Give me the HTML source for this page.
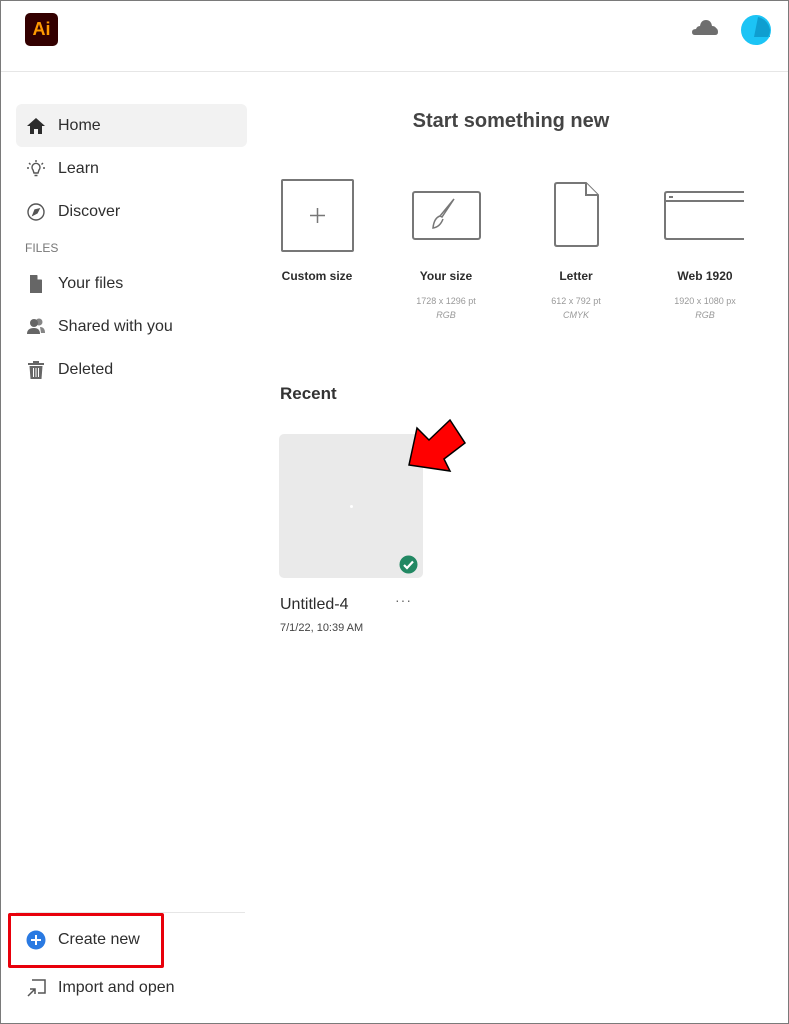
<!DOCTYPE html>
<html><head><meta charset="utf-8"><style>
*{margin:0;padding:0;box-sizing:border-box}
body{width:789px;height:1024px;background:#fff;font-family:"Liberation Sans",sans-serif;color:#2c2c2c;position:relative;overflow:hidden}
.frame{position:absolute;inset:0;border:1px solid #7a7a7a;pointer-events:none;z-index:9}
.a{position:absolute}
.nav{position:absolute;left:26px;font-size:16px;color:#2e2e2e;display:flex;align-items:center}
.nav svg{width:20px;height:20px;margin-right:12px}
.t{font-size:12px;font-weight:bold;color:#2c2c2c;text-align:center;width:120px}
.s{font-size:9px;color:#999;text-align:center;width:120px;line-height:14px}
</style></head><body>
<div class="frame"></div>
<div class="a" style="left:25px;top:13px;width:33px;height:33px;background:#330000;border-radius:5px;color:#ff9a00;font-weight:bold;font-size:18px;text-align:center;line-height:33px">Ai</div>
<svg class="a" style="left:691px;top:17px" width="28" height="20" viewBox="0 0 28 20"><path d="M4 18 Q1 18 1 15 Q1 12 5 12 Q6 9 9 9 Q10 3 15 3 Q20 3 21 9 Q24 9 25 11 Q27 12 27 15 Q27 18 24 18Z" fill="#6e6e6e"/></svg>
<svg class="a" style="left:741px;top:15px" width="30" height="30" viewBox="0 0 30 30"><circle cx="15" cy="15" r="14.5" fill="#1cc4f5"/><path d="M13 22 L17 2 Q26 4 29 14 L29 22Z" fill="#0f9ed0"/><circle cx="15" cy="15" r="14.5" fill="none" stroke="#1cc4f5" stroke-width="1"/></svg>
<div class="a" style="left:0;top:71px;width:789px;height:1px;background:#e6e6e6"></div>

<div class="a" style="left:16px;top:104px;width:231px;height:43px;background:#f2f2f2;border-radius:6px"></div>
<div class="nav" style="top:116px"><svg viewBox="0 0 20 20"><path d="M10 2 L19 10 H16 V18 H12 V13 H8 V18 H4 V10 H1Z" fill="#2c2c2c"/></svg>Home</div>
<div class="nav" style="top:159px"><svg viewBox="0 0 20 20" fill="none" stroke="#555" stroke-width="1.4"><path d="M7 11 a4 4 0 1 1 6 0 L12 14 H8Z"/><path d="M8.5 16.5 h3M10 1v2M3 4l1.5 1.5M17 4l-1.5 1.5M1 9h2M17 9h2"/></svg>Learn</div>
<div class="nav" style="top:202px"><svg viewBox="0 0 20 20" fill="none" stroke="#555" stroke-width="1.4"><circle cx="10" cy="10" r="8"/><path d="M7 13 L9 8 L13 7 L11 11Z" fill="#555"/></svg>Discover</div>
<div class="a" style="left:25px;top:241px;font-size:12px;color:#777">FILES</div>
<div class="nav" style="top:274px"><svg viewBox="0 0 20 20"><path d="M4 1 H11 L16 6 V19 H4Z" fill="#666"/><path d="M11.5 1 V5.5 H16" fill="#fff"/></svg>Your files</div>
<div class="nav" style="top:317px"><svg viewBox="0 0 20 20" fill="#666"><circle cx="8" cy="6" r="4"/><path d="M1 17 Q1 11 8 11 Q14 11 14 17Z"/><circle cx="13" cy="5" r="3.5" opacity=".8"/><path d="M14 10 Q19 10 19 16 H15Z" opacity=".8"/></svg>Shared with you</div>
<div class="nav" style="top:360px"><svg viewBox="0 0 20 20" fill="#666"><rect x="2" y="3" width="16" height="2"/><rect x="7" y="1" width="6" height="2"/><path d="M3.5 6 H16.5 L15.5 19 H4.5Z"/><path d="M7.5 8v9M10 8v9M12.5 8v9" stroke="#fff" stroke-width="1"/></svg>Deleted</div>

<div class="a" style="left:16px;top:912px;width:229px;height:1px;background:#e6e6e6"></div>
<div class="a" style="left:8px;top:913px;width:156px;height:55px;border:3px solid #e8000b;border-radius:2px"></div>
<div class="nav" style="top:930px"><svg viewBox="0 0 20 20"><circle cx="10" cy="10" r="9.5" fill="#2a7ae2"/><path d="M10 5v10M5 10h10" stroke="#fff" stroke-width="2"/></svg>Create new</div>
<div class="nav" style="top:978px"><svg viewBox="0 0 20 20" fill="none" stroke="#555" stroke-width="1.5"><path d="M6 2 H19 V15 H12"/><path d="M2 18 L9 11 M4 11 H9 V16"/></svg>Import and open</div>

<div class="a" style="left:280px;top:110px;width:462px;text-align:center;font-size:20px;font-weight:bold;color:#444">Start something new</div>
<svg class="a" style="left:281px;top:179px" width="73" height="73"><rect x="1" y="1" width="71" height="71" fill="none" stroke="#777" stroke-width="2" rx="1"/><path d="M36.5 29v15M29 36.5h15" stroke="#777" stroke-width="1.5"/></svg>
<svg class="a" style="left:412px;top:191px" width="69" height="50"><rect x="1" y="1" width="67" height="47" fill="none" stroke="#777" stroke-width="2" rx="2"/><path d="M42 8 L30 26 L28 25Z" fill="none" stroke="#777" stroke-width="1.5"/><path d="M28 25 Q22 27 21 37 Q28 36 31 28" fill="none" stroke="#777" stroke-width="1.5"/></svg>
<svg class="a" style="left:553px;top:182px" width="47" height="66"><path d="M4 1 H33 L45 13 V62 Q45 64 43 64 H4 Q2 64 2 62 V3 Q2 1 4 1Z" fill="none" stroke="#777" stroke-width="2"/><path d="M33 1 V13 H45" fill="#fff" stroke="#777" stroke-width="2"/></svg>
<svg class="a" style="left:664px;top:191px" width="80" height="50"><path d="M80 1 H3 Q1 1 1 3 V46 Q1 48 3 48 H80 M1 10 H80 M5 6 H9" fill="none" stroke="#777" stroke-width="2"/></svg>
<div class="a t" style="left:257px;top:269px">Custom size</div>
<div class="a t" style="left:386px;top:269px">Your size</div>
<div class="a s" style="left:386px;top:294px">1728 x 1296 pt<br><i>RGB</i></div>
<div class="a t" style="left:516px;top:269px">Letter</div>
<div class="a s" style="left:516px;top:294px">612 x 792 pt<br><i>CMYK</i></div>
<div class="a t" style="left:645px;top:269px">Web 1920</div>
<div class="a s" style="left:645px;top:294px">1920 x 1080 px<br><i>RGB</i></div>

<div class="a" style="left:280px;top:384px;font-size:17px;font-weight:bold;color:#333">Recent</div>
<div class="a" style="left:279px;top:434px;width:144px;height:144px;background:#eaeaea;border-radius:5px"></div>
<div class="a" style="left:350px;top:505px;width:3px;height:3px;background:#fff;border-radius:50%"></div>
<svg class="a" style="left:399px;top:555px" width="19" height="19"><circle cx="9.5" cy="9.5" r="9" fill="#228863"/><path d="M5 10 L8 13 L14 6.5" fill="none" stroke="#fff" stroke-width="2.2"/></svg>
<div class="a" style="left:280px;top:596px;font-size:16px;color:#2c2c2c">Untitled-4</div>
<div class="a" style="left:395px;top:592px;font-size:14px;color:#666;letter-spacing:1px">···</div>
<div class="a" style="left:280px;top:622px;font-size:11px;color:#444">7/1/22, 10:39 AM</div>
<svg class="a" style="left:400px;top:413px" width="70" height="65"><path d="M9 52 L17 15 L29 27 L50 7 L65 30 L44 46 L50 58Z" fill="#ff0000" stroke="#000" stroke-width="1.5"/></svg>
</body></html>
